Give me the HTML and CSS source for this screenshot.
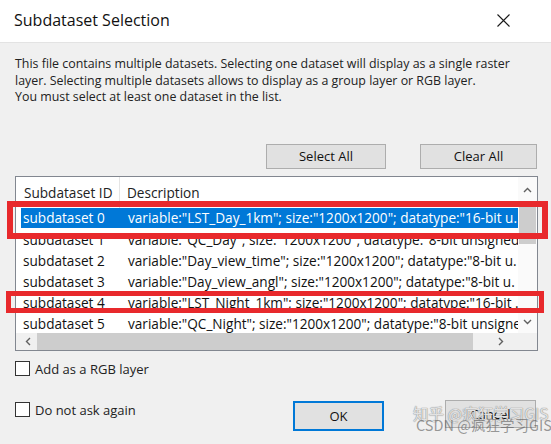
FILE: index.html
```html
<!DOCTYPE html>
<html lang="en">
<head>
    <meta charset="UTF-8">
    <title>Subdataset Selection</title>
    <link rel="stylesheet" href="styles.css">
</head>
<body>
    <div class="dialog">
        <div class="titlebar">
            <span class="title">Subdataset Selection</span>
            <svg class="close" width="13" height="13" viewBox="0 0 13 13">
                <path d="M0.5 0.5 L12.5 12.5 M12.5 0.5 L0.5 12.5" stroke="#1a1a1a" stroke-width="1.1" fill="none"/>
            </svg>
        </div>

        <div class="content">
            <p class="intro">
                This file contains multiple datasets. Selecting one dataset will display as a single raster<br>
                layer. Selecting multiple datasets allows to display as a group layer or RGB layer.<br>
                You must select at least one dataset in the list.
            </p>

            <div class="actions">
                <button class="btn btn-wide">Select All</button>
                <button class="btn btn-clear">Clear All</button>
            </div>

            <div class="list">
                <div class="list-view">
                    <div class="list-header">
                        <div class="col-id">Subdataset ID</div>
                        <div class="col-desc">Description</div>
                    </div>
                    <div class="row selected">
                        <div class="col-id">subdataset 0</div>
                        <div class="col-desc">variable:"LST_Day_1km"; size:"1200x1200"; datatype:"16-bit u.</div>
                    </div>
                    <div class="row">
                        <div class="col-id">subdataset 1</div>
                        <div class="col-desc">variable:"QC_Day"; size:"1200x1200"; datatype:"8-bit unsigned</div>
                    </div>
                    <div class="row">
                        <div class="col-id">subdataset 2</div>
                        <div class="col-desc">variable:"Day_view_time"; size:"1200x1200"; datatype:"8-bit u.</div>
                    </div>
                    <div class="row">
                        <div class="col-id">subdataset 3</div>
                        <div class="col-desc">variable:"Day_view_angl"; size:"1200x1200"; datatype:"8-bit u.</div>
                    </div>
                    <div class="row">
                        <div class="col-id">subdataset 4</div>
                        <div class="col-desc">variable:"LST_Night_1km"; size:"1200x1200"; datatype:"16-bit .</div>
                    </div>
                    <div class="row">
                        <div class="col-id">subdataset 5</div>
                        <div class="col-desc">variable:"QC_Night"; size:"1200x1200"; datatype:"8-bit unsigne</div>
                    </div>
                </div>

                <div class="vscroll">
                    <svg width="9" height="6" viewBox="0 0 9 6"><path d="M1 5 L4.5 1.5 L8 5" stroke="#606060" stroke-width="1.4" fill="none"/></svg>
                    <div class="vthumb"></div>
                    <svg class="down" width="9" height="6" viewBox="0 0 9 6"><path d="M1 1 L4.5 4.5 L8 1" stroke="#606060" stroke-width="1.4" fill="none"/></svg>
                </div>

                <div class="hscroll">
                    <svg width="6" height="9" viewBox="0 0 6 9"><path d="M5 1 L1.5 4.5 L5 8" stroke="#606060" stroke-width="1.4" fill="none"/></svg>
                    <div class="hthumb"></div>
                    <svg width="6" height="9" viewBox="0 0 6 9"><path d="M1 1 L4.5 4.5 L1 8" stroke="#606060" stroke-width="1.4" fill="none"/></svg>
                </div>
                <div class="corner"></div>
            </div>

            <label class="check check-rgb">
                <span class="box"></span>
                Add as a RGB layer
            </label>

            <div class="footer">
                <label class="check check-ask">
                    <span class="box"></span>
                    Do not ask again
                </label>
                <div class="footer-buttons">
                    <button class="btn btn-ok">OK</button>
                    <button class="btn btn-cancel">Cancel</button>
                </div>
            </div>
        </div>

        <!-- annotation boxes drawn over the screenshot -->
        <div class="mark mark-row0"></div>
        <div class="mark mark-row4"></div>

        <div class="watermark wm-zhihu">知乎 @疯狂学习GIS</div>
        <div class="watermark wm-csdn">CSDN @疯狂学习GIS</div>
    </div>
</body>
</html>
```

FILE: styles.css
```css
* {
    box-sizing: border-box;
    margin: 0;
    padding: 0;
}

body {
    background-color: #f0f0f0;
    font-family: 'Open Sans', 'Noto Sans', 'Noto Sans CJK SC', sans-serif;
    color: #1a1a1a;
}

.dialog {
    position: relative;
    width: 551px;
    height: 444px;
    background-color: #f0f0f0;
    overflow: hidden;
}

.titlebar {
    height: 43px;
    background-color: white;
    border-bottom: 1px solid #e3e3e3;
    display: flex;
    align-items: center;
    justify-content: space-between;
    padding: 0 41px 2px 14px;
}

.title {
    font-size: 16px;
    color: #111;
}

.close {
    display: block;
}

.content {
    padding: 0 14px 0 15px;
}

.intro {
    font-size: 12.4px;
    line-height: 16.5px;
    padding-top: 13px;
    color: #222;
}

.actions {
    display: flex;
    justify-content: flex-end;
    gap: 34px;
    margin-top: 38px;
}

.btn {
    font-family: 'Open Sans', 'Noto Sans', sans-serif;
    font-size: 13px;
    color: #111;
    background-color: #e1e1e1;
    border: 1px solid #adadad;
    height: 25px;
}

.btn-wide {
    width: 120px;
}

.btn-clear {
    width: 117px;
}

.list {
    margin-top: 7px;
    width: 523px;
    height: 175px;
    border: 1px solid #828790;
    background-color: white;
    display: grid;
    grid-template-columns: 502px 19px;
    grid-template-rows: 156px 17px;
}

.list-view {
    overflow: hidden;
    font-size: 13.6px;
    white-space: nowrap;
}

.list-header {
    display: flex;
    height: 31px;
    align-items: center;
    color: #222;
}

.list-header .col-id {
    width: 104px;
    flex-shrink: 0;
    padding-left: 8px;
    border-right: 1px solid #e5e5e5;
    height: 100%;
    display: flex;
    align-items: center;
}

.list-header .col-desc {
    padding-left: 7px;
}

.row {
    display: flex;
    height: 21px;
    align-items: center;
    margin-left: 5px;
    color: #111;
}

.row .col-id {
    width: 99px;
    flex-shrink: 0;
    padding-left: 2px;
}

.row .col-desc {
    padding-left: 8px;
}

.row.selected {
    background-color: #0078d7;
    color: white;
    height: 20px;
    margin-bottom: 1px;
}

.vscroll {
    grid-row: 1;
    grid-column: 2;
    display: flex;
    flex-direction: column;
    align-items: center;
    padding-top: 10px;
    background-color: #fafafa;
}

.vthumb {
    width: 17px;
    height: 42px;
    margin-top: 9px;
    background-color: #cdcdcd;
}

.vscroll .down {
    margin-top: auto;
    margin-bottom: 8px;
}

.hscroll {
    grid-row: 2;
    grid-column: 1;
    display: flex;
    align-items: center;
    padding-left: 9px;
    padding-right: 14px;
    background-color: #f0f0f0;
}

.hthumb {
    width: 436px;
    height: 100%;
    margin-left: 6px;
    margin-right: auto;
    background-color: #cdcdcd;
}

.corner {
    grid-row: 2;
    grid-column: 2;
    background-color: #f0f0f0;
}

.check {
    display: flex;
    align-items: center;
    font-size: 13px;
    color: #222;
}

.check .box {
    width: 15px;
    height: 15px;
    border: 1px solid #333;
    background-color: white;
    margin-right: 5px;
}

.check-rgb {
    margin-top: 9px;
}

.footer {
    display: flex;
    justify-content: space-between;
    align-items: flex-start;
    margin-top: 22px;
}

.check-ask {
    margin-top: 1px;
}

.footer-buttons {
    display: flex;
    gap: 61px;
    margin-right: 1px;
}

.btn-ok {
    width: 91px;
    height: 30px;
    margin-top: 1px;
    border: 2px solid #0078d7;
}

.btn-cancel {
    width: 91px;
    height: 28px;
}

.mark {
    position: absolute;
    border: 6px solid #e8292c;
}

.mark-row0 {
    left: 7px;
    top: 201px;
    width: 541px;
    height: 38px;
}

.mark-row4 {
    left: 6px;
    top: 291px;
    width: 538px;
    height: 22px;
    border-width: 5px;
}

.watermark {
    position: absolute;
    white-space: nowrap;
    font-family: 'Noto Sans CJK SC', sans-serif;
}

.wm-zhihu {
    left: 413px;
    top: 402px;
    font-size: 15.5px;
    color: rgba(255, 255, 255, 0.75);
    text-shadow: 0 0 1px #8a8a8a, 0 0 1px #8a8a8a;
}

.wm-csdn {
    left: 416px;
    top: 414px;
    font-size: 14.5px;
    color: rgba(90, 90, 90, 0.6);
}
```
